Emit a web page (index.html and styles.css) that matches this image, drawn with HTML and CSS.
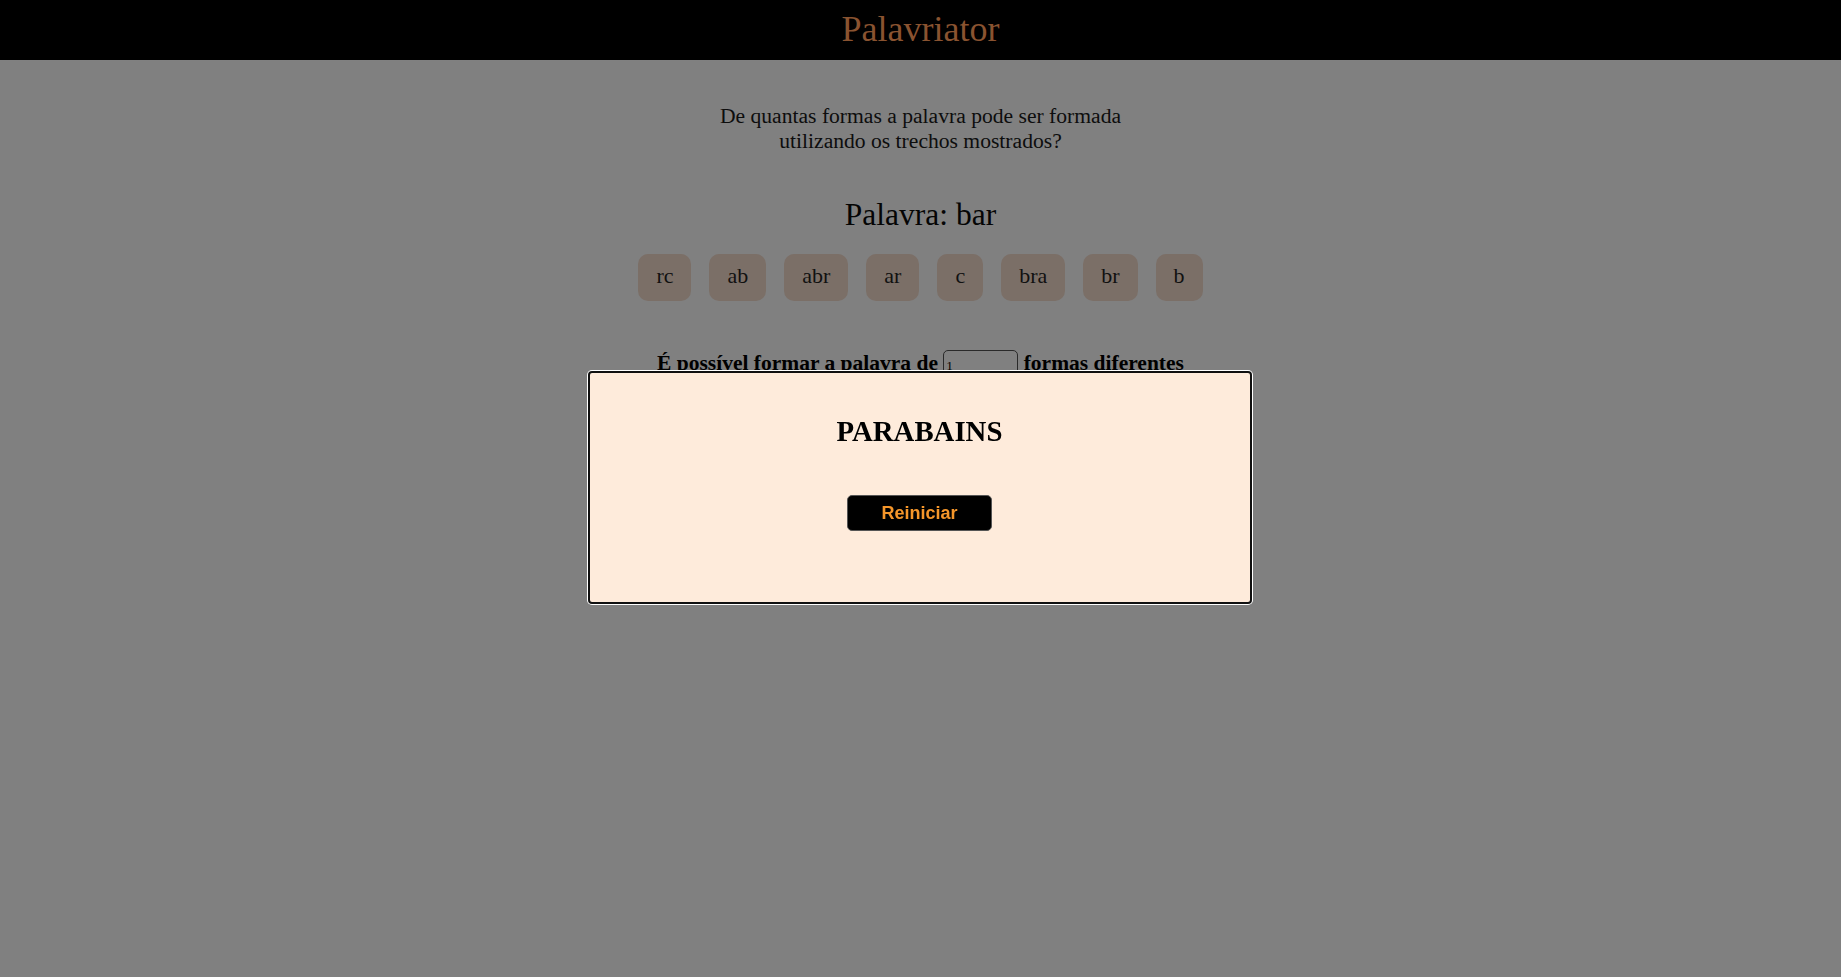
FILE: index.html
```html
<!DOCTYPE html>
<html lang="pt-BR">
<head>
<meta charset="utf-8">
<title>Palavriator</title>
<link rel="stylesheet" href="styles.css">
</head>
<body>
<header class="topbar">
  <h1 class="brand">Palavriator</h1>
</header>
<main class="game">
  <p class="question">De quantas formas a palavra pode ser formada utilizando os trechos mostrados?</p>
  <h2 class="word">Palavra: bar</h2>
  <div class="pieces">
    <span class="piece">rc</span>
    <span class="piece">ab</span>
    <span class="piece">abr</span>
    <span class="piece">ar</span>
    <span class="piece">c</span>
    <span class="piece">bra</span>
    <span class="piece">br</span>
    <span class="piece">b</span>
  </div>
  <p class="answer">É possível formar a palavra de <input class="answer-input" type="text" value="1"> formas diferentes</p>
</main>
<div class="overlay">
  <div class="modal">
    <h2 class="modal-title">PARABAINS</h2>
    <button class="restart" type="button">Reiniciar</button>
  </div>
</div>
</body>
</html>
```

FILE: styles.css
```css
html, body {
  margin: 0;
  padding: 0;
}

body {
  background: #808080;
  color: #000;
  font-family: "Liberation Serif", "Times New Roman", serif;
  min-height: 977px;
}

.topbar {
  background: #000;
  height: 60px;
  text-align: center;
}

.brand {
  margin: 0;
  font-weight: normal;
  font-size: 36px;
  line-height: 58px;
  color: #8a5330;
}

.game {
  display: flex;
  flex-direction: column;
  align-items: center;
  padding-top: 44px;
}

.question {
  margin: 0;
  max-width: 440px;
  text-align: center;
  font-size: 21.6px;
  line-height: 25px;
  color: #0d0d0d;
}

.word {
  margin: 42px 0 0;
  font-weight: normal;
  font-size: 31.5px;
  line-height: 37px;
  color: #050505;
}

.pieces {
  display: flex;
  gap: 18px;
  margin-top: 21px;
}

.piece {
  display: block;
  background: #7b6f67;
  border-radius: 10px;
  padding: 9px 18px 13px;
  font-size: 22px;
  line-height: 25px;
  color: #111;
}

.answer {
  margin: 49px 0 0;
  font-weight: bold;
  font-size: 21.5px;
  text-align: center;
}

.answer-input {
  box-sizing: border-box;
  width: 75px;
  height: 32px;
  padding: 0 2px;
  border: 1px solid #2a2a2a;
  border-radius: 5px;
  background: transparent;
  font-family: "Liberation Serif", serif;
  font-size: 13.33px;
  color: #000;
  vertical-align: baseline;
}

.overlay {
  position: fixed;
  inset: 0;
  display: flex;
  align-items: center;
  justify-content: center;
  padding-bottom: 2px;
  padding-right: 2px;
}

.modal {
  box-sizing: border-box;
  width: 664px;
  height: 233px;
  background: #feebdb;
  border: 2px solid #101010;
  border-radius: 4px;
  box-shadow: 0 0 0 1px #ffffff;
  display: flex;
  flex-direction: column;
  align-items: center;
  padding-top: 42px;
}

.modal-title {
  margin: 0;
  font-size: 28.8px;
  line-height: 32px;
  font-weight: bold;
}

.restart {
  margin-top: 48px;
  padding: 7px 33px;
  border: 1px solid #555;
  border-radius: 5px;
  background: #000;
  color: #f5962a;
  font-family: "Liberation Sans", Arial, sans-serif;
  font-weight: bold;
  font-size: 18px;
  line-height: 20px;
}
```
